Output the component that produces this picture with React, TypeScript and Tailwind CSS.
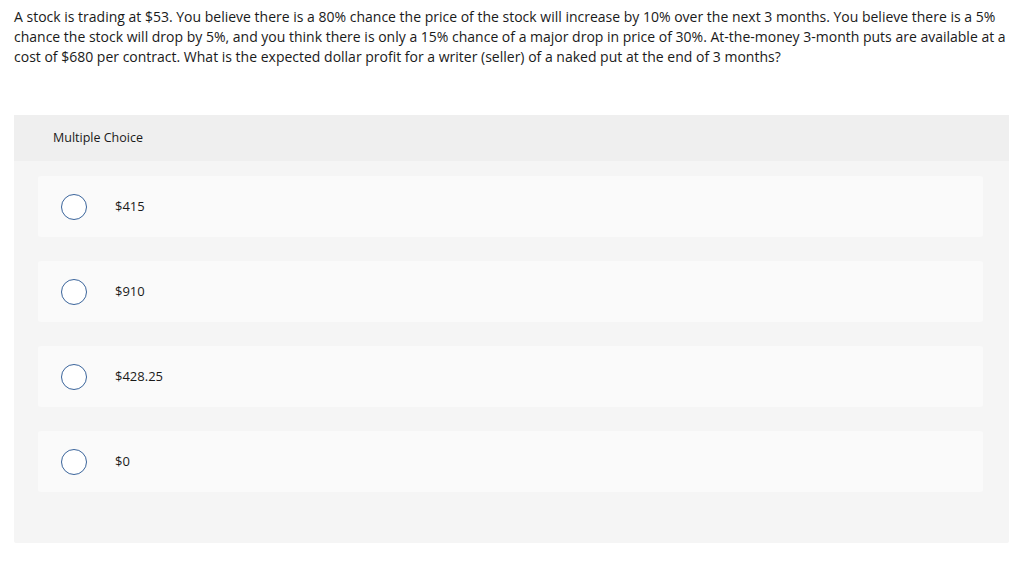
import React from "react";

const options = ["$415", "$910", "$428.25", "$0"];

export default function App() {
  return (
    <div className="w-[1024px] h-[566px] bg-white" style={{ fontFamily: '"Open Sans", "Liberation Sans", sans-serif' }}>
      <div className="pl-[14px] pr-[8px] pt-[7px] text-[14px] leading-[20px] text-[#1a1a1a]">
        A stock is trading at $53. You believe there is a 80% chance the price of the stock will increase by 10% over the next 3 months. You believe there is a 5% chance the stock will drop by 5%, and you think there is only a 15% chance of a major drop in price of 30%. At-the-money 3-month puts are available at a cost of $680 per contract. What is the expected dollar profit for a writer (seller) of a naked put at the end of 3 months?
      </div>
      <div className="ml-[14px] mt-[48px] w-[995px] h-[428px] bg-[#f5f5f5] rounded-[2px] flex flex-col">
        <div className="h-[46px] bg-[#efefef] flex items-center pl-[39px] pt-[1px] text-[12.5px] text-[#1a1a1a]">
          Multiple Choice
        </div>
        <div className="pl-[24px] pr-[26px] pt-[15px] flex flex-col gap-[24px]">
          {options.map((o) => (
            <div key={o} className="h-[61px] bg-[#fafafa] rounded-[3px] flex items-center pl-[23px]">
              <div className="w-[26px] h-[26px] rounded-full border border-[#3a649b] bg-white shrink-0" />
              <div className="ml-[28px] text-[13px] text-[#1a1a1a]">{o}</div>
            </div>
          ))}
        </div>
      </div>
    </div>
  );
}
